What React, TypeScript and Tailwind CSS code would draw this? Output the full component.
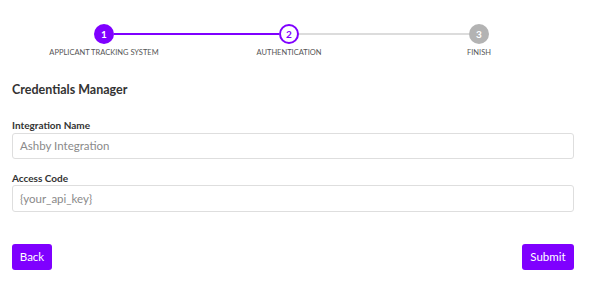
import React from "react";

export default function App() {
  const font = { fontFamily: 'Lato, "Open Sans", sans-serif' };
  return (
    <div className="w-[591px] h-[287px] bg-white overflow-hidden" style={font}>
      {/* Stepper */}
      <div className="flex items-start pt-[24px] pl-[94px]">
        <div className="flex flex-col items-center w-[20px]">
          <div className="w-[20px] h-[20px] rounded-full bg-[#7f00ff] text-white text-[10px] font-bold flex items-center justify-center leading-none">1</div>
          <div className="mt-[4px] whitespace-nowrap text-[7.5px] leading-[10px] text-[#555] uppercase">Applicant Tracking System</div>
        </div>
        <div className="w-[165px] h-[2px] bg-[#7f00ff] mt-[9px]" />
        <div className="flex flex-col items-center w-[20px]">
          <div className="w-[20px] h-[20px] rounded-full bg-white border-2 border-[#7f00ff] text-[#7f00ff] text-[10px] font-bold flex items-center justify-center leading-none">2</div>
          <div className="mt-[4px] whitespace-nowrap text-[7.5px] leading-[10px] text-[#555] uppercase">Authentication</div>
        </div>
        <div className="w-[170px] h-[2px] bg-[#dcdcdc] mt-[9px]" />
        <div className="flex flex-col items-center w-[20px]">
          <div className="w-[20px] h-[20px] rounded-full bg-[#b3b3b3] text-white text-[10px] font-bold flex items-center justify-center leading-none">3</div>
          <div className="mt-[4px] whitespace-nowrap text-[7.5px] leading-[10px] text-[#555] uppercase">Finish</div>
        </div>
      </div>

      {/* Form */}
      <div className="px-[12px] pr-[17px]">
        <h2 className="mt-[23px] text-[12.5px] leading-[18px] font-bold text-[#333]">Credentials Manager</h2>

        <label className="block mt-[20px] text-[10px] leading-[13px] font-bold text-[#333]">Integration Name</label>
        <div className="mt-[1px] h-[26px] border border-[#dedede] rounded-[3px] flex items-center px-[7px] text-[11.5px] text-[#8a8a8a]">Ashby Integration</div>

        <label className="block mt-[13px] text-[10px] leading-[13px] font-bold text-[#333]">Access Code</label>
        <div className="mt-[0px] h-[27px] border border-[#dedede] rounded-[3px] flex items-center px-[7px] text-[11.5px] text-[#8a8a8a]">{"{your_api_key}"}</div>

        <div className="mt-[32px] flex justify-between">
          <button className="w-[40px] h-[26px] rounded-[3px] bg-[#7f00ff] text-white text-[11.5px] flex items-center justify-center">Back</button>
          <button className="w-[52px] h-[26px] rounded-[3px] bg-[#7f00ff] text-white text-[11.5px] flex items-center justify-center">Submit</button>
        </div>
      </div>
    </div>
  );
}
